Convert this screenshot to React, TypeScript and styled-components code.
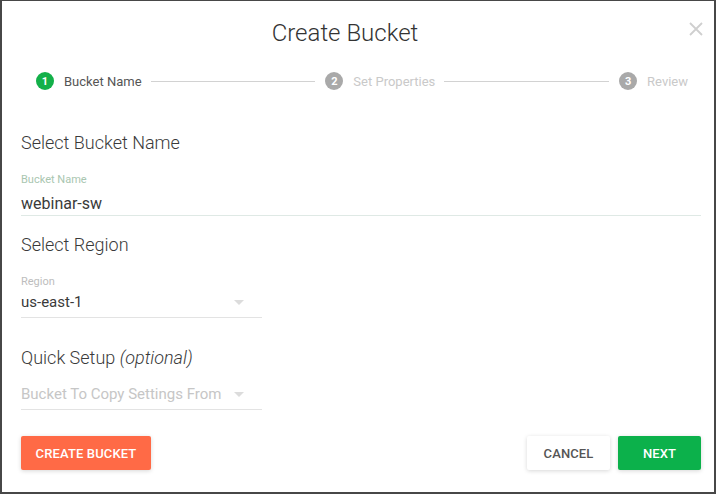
import { Fragment } from 'react'
import styled, { createGlobalStyle } from 'styled-components'

const GlobalStyle = createGlobalStyle`
  html, body {
    margin: 0;
    padding: 0;
    background: #ffffff;
    font-family: Roboto, 'Noto Sans', Arial, sans-serif;
  }
  * { box-sizing: border-box; }
`

const STEPS = [
  { n: 1, label: 'Bucket Name', active: true },
  { n: 2, label: 'Set Properties', active: false },
  { n: 3, label: 'Review', active: false },
]

// ── Dialog ───────────────────────────────────────────────────────────────────

const Dialog = styled.div`
  position: relative;
  width: 716px;
  height: 494px;
  border: 2px solid #474747;
  border-top-width: 1px;
  background: #ffffff;
  padding: 18px 13px 0 19px;
`

const Header = styled.div`
  display: flex;
  justify-content: center;
  padding-right: 32px;
`

const Title = styled.h1`
  margin: 0;
  font-size: 24px;
  line-height: 28px;
  font-weight: 300;
  color: #333333;
`

const CloseButton = styled.button`
  position: absolute;
  top: 20px;
  right: 10px;
  width: 16px;
  height: 16px;
  padding: 0;
  border: none;
  background: none;
  cursor: pointer;
  display: flex;
`

// ── Stepper ──────────────────────────────────────────────────────────────────

const Stepper = styled.div`
  display: flex;
  align-items: center;
  margin: 25px 13px 0 15px;
  height: 18px;
`

const Step = styled.div`
  display: flex;
  align-items: center;
  gap: 10px;
`

const StepDot = styled.span<{ $active: boolean }>`
  width: 18px;
  height: 18px;
  border-radius: 50%;
  background: ${({ $active }) => ($active ? '#13b049' : '#a9a9a9')};
  color: #ffffff;
  font-size: 11px;
  font-weight: 700;
  display: flex;
  align-items: center;
  justify-content: center;
`

const StepLabel = styled.span<{ $active: boolean }>`
  font-size: 13px;
  color: ${({ $active }) => ($active ? '#555555' : '#c9c9c9')};
  white-space: nowrap;
`

const StepLine = styled.span`
  flex: 1;
  height: 1px;
  background: #d2d2d2;
  margin: 0 10px 0 9px;
`

// ── Form ─────────────────────────────────────────────────────────────────────

const SectionTitle = styled.h2<{ $top: number }>`
  margin: ${({ $top }) => $top}px 0 0;
  font-size: 18px;
  line-height: 22px;
  font-weight: 300;
  color: #3a3a3a;

  em { font-style: italic; }
`

const FieldLabel = styled.div<{ $color: string }>`
  margin-top: 19px;
  font-size: 11px;
  line-height: 14px;
  color: ${({ $color }) => $color};
`

const TextInput = styled.div`
  margin-top: 7px;
  font-size: 16px;
  line-height: 20px;
  color: #3a3a3a;
  padding-bottom: 1px;
  border-bottom: 1px solid #dfe9e5;
`

const Select = styled.div<{ $top: number; $placeholder?: boolean }>`
  margin-top: ${({ $top }) => $top}px;
  width: 241px;
  display: flex;
  align-items: center;
  justify-content: space-between;
  font-size: 15px;
  line-height: 20px;
  color: ${({ $placeholder }) => ($placeholder ? '#c6c6c6' : '#3a3a3a')};
  padding: 0 18px 5px 0;
  border-bottom: 1px solid #e3e3e3;
`

const Caret = styled.span`
  width: 0;
  height: 0;
  border-left: 5px solid transparent;
  border-right: 5px solid transparent;
  border-top: 5px solid #dcdcdc;
`

// ── Footer ───────────────────────────────────────────────────────────────────

const Footer = styled.div`
  display: flex;
  justify-content: space-between;
  margin-top: 26px;
`

const Actions = styled.div`
  display: flex;
  gap: 8px;
`

const Button = styled.button<{ $bg: string; $fg: string; $width: number }>`
  width: ${({ $width }) => $width}px;
  height: 34px;
  border: none;
  border-radius: 2px;
  background: ${({ $bg }) => $bg};
  color: ${({ $fg }) => $fg};
  font-family: Roboto, Arial, sans-serif;
  font-size: 13px;
  font-weight: 500;
  letter-spacing: 0.01em;
  box-shadow: 0 1px 4px rgba(0, 0, 0, 0.16);
  cursor: pointer;
`

export default function App() {
  return (
    <>
      <GlobalStyle />
      <Dialog>
        <Header>
          <Title>Create Bucket</Title>
        </Header>
        <CloseButton aria-label="Close">
          <svg width="16" height="16" viewBox="0 0 16 16">
            <path d="M2 2 L14 14 M14 2 L2 14" stroke="#cfcfcf" strokeWidth="1.8" />
          </svg>
        </CloseButton>

        <Stepper>
          {STEPS.map((s, i) => (
            <Fragment key={s.n}>
              <Step>
                <StepDot $active={s.active}>{s.n}</StepDot>
                <StepLabel $active={s.active}>{s.label}</StepLabel>
              </Step>
              {i < STEPS.length - 1 && <StepLine />}
            </Fragment>
          ))}
        </Stepper>

        <SectionTitle $top={42}>Select Bucket Name</SectionTitle>
        <FieldLabel $color="#a9c6b0">Bucket Name</FieldLabel>
        <TextInput>webinar-sw</TextInput>

        <SectionTitle $top={18}>Select Region</SectionTitle>
        <FieldLabel $color="#bdbdbd">Region</FieldLabel>
        <Select $top={3}>
          us-east-1
          <Caret />
        </Select>

        <SectionTitle $top={29}>
          Quick Setup <em>(optional)</em>
        </SectionTitle>
        <Select $top={15} $placeholder>
          Bucket To Copy Settings From
          <Caret />
        </Select>

        <Footer>
          <Button $bg="#ff6a46" $fg="#ffffff" $width={130}>CREATE BUCKET</Button>
          <Actions>
            <Button $bg="#ffffff" $fg="#555555" $width={83}>CANCEL</Button>
            <Button $bg="#0cb14b" $fg="#ffffff" $width={83}>NEXT</Button>
          </Actions>
        </Footer>
      </Dialog>
    </>
  )
}
